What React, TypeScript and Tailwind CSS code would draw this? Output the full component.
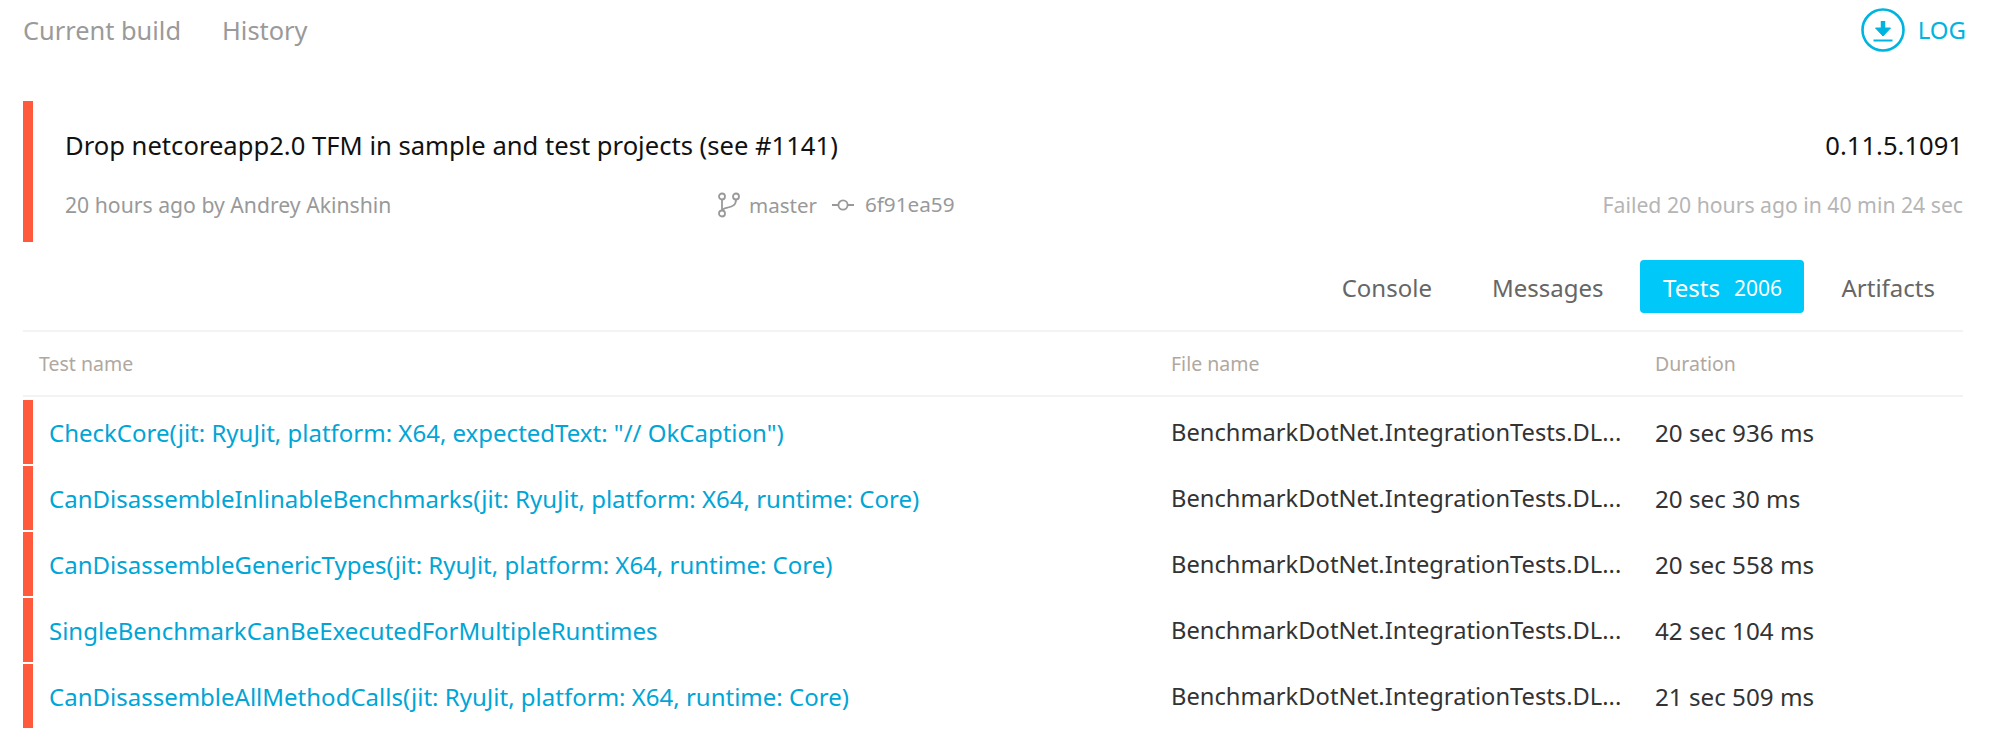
const tests = [
  { name: 'CheckCore(jit: RyuJit, platform: X64, expectedText: "// OkCaption")', duration: '20 sec 936 ms' },
  { name: 'CanDisassembleInlinableBenchmarks(jit: RyuJit, platform: X64, runtime: Core)', duration: '20 sec 30 ms' },
  { name: 'CanDisassembleGenericTypes(jit: RyuJit, platform: X64, runtime: Core)', duration: '20 sec 558 ms' },
  { name: 'SingleBenchmarkCanBeExecutedForMultipleRuntimes', duration: '42 sec 104 ms' },
  { name: 'CanDisassembleAllMethodCalls(jit: RyuJit, platform: X64, runtime: Core)', duration: '21 sec 509 ms' },
];

function BranchIcon() {
  return (
    <svg width="24" height="26" viewBox="0 0 24 26" fill="none" stroke="currentColor" strokeWidth="1.8">
      <circle cx="5" cy="4.5" r="3" />
      <circle cx="19" cy="4.5" r="3" />
      <circle cx="5" cy="21.5" r="3" />
      <path d="M5 7.5v11" />
      <path d="M19 7.5c0 6-4 7-8 8-3 .8-6 1.5-6 3" />
    </svg>
  );
}

function CommitIcon() {
  return (
    <svg width="22" height="14" viewBox="0 0 22 14" fill="none" stroke="currentColor" strokeWidth="1.8">
      <circle cx="11" cy="7" r="4.6" />
      <path d="M0 7h6.4M15.6 7H22" />
    </svg>
  );
}

export default function App() {
  return (
    <div className="h-[730px] overflow-hidden bg-white pl-[23px] pr-[26px] font-['Noto_Sans',sans-serif]">
      {/* Top nav */}
      <div className="flex h-[60px] items-center justify-between">
        <div className="flex items-center gap-[41px] text-[25.4px] text-[#9a9a9a]">
          <span>Current build</span>
          <span>History</span>
        </div>
        <div className="-mr-[3px] flex items-center gap-[13px] text-[#00b4e0]">
          <svg width="44" height="44" viewBox="0 0 44 44" fill="none" stroke="currentColor">
            <circle cx="22" cy="22" r="20.5" strokeWidth="2.6" />
            <path d="M22 13v10" strokeWidth="4.5" />
            <path d="M14.5 20l7.5 8 7.5-8z" fill="currentColor" strokeWidth="1" />
            <path d="M12.5 32.5h19" strokeWidth="2" />
          </svg>
          <span className="text-[24px]">LOG</span>
        </div>
      </div>

      {/* Build summary */}
      <div className="mt-[41px] flex h-[141px] border-l-[10px] border-[#ff5a3c] pl-8">
        <div className="flex flex-1 flex-col">
          <div className="mt-[31px] flex h-7 items-center justify-between text-[25.6px] text-[#111111]">
            <span>Drop netcoreapp2.0 TFM in sample and test projects (see #1141)</span>
            <span>0.11.5.1091</span>
          </div>
          <div className="mt-[29px] grid h-7 grid-cols-[652px_1fr_auto] items-center text-[20.5px] text-[#999999]">
            <span className="text-[21.2px]">20 hours ago by Andrey Akinshin</span>
            <div className="flex items-center">
              <BranchIcon />
              <span className="ml-[8px]">master</span>
              <span className="ml-[15px]"><CommitIcon /></span>
              <span className="ml-[11px] text-[20.7px]">6f91ea59</span>
            </div>
            <span className="text-[21.2px] text-[#b5b5b5]">Failed 20 hours ago in 40 min 24 sec</span>
          </div>
        </div>
      </div>

      {/* Tabs */}
      <div className="mt-[18px] flex h-[53px] items-center justify-end pr-[28px] text-[24px] text-[#666666]">
        <span className="mr-[60px] pt-[2px]">Console</span>
        <span className="mr-[37px] pt-[2px]">Messages</span>
        <span className="mr-[37px] flex h-[53px] w-[164px] items-center justify-center gap-[14px] rounded-[4px] bg-[#00c8f8] pt-[2px] text-white">
          Tests <span className="pt-[2px] text-[21px]">2006</span>
        </span>
        <span className="pt-[2px]">Artifacts</span>
      </div>

      {/* Table */}
      <div className="mt-[17px] border-t-2 border-[#f3f3f3]">
        <div className="grid h-[65px] grid-cols-[1132px_484px_1fr] items-center border-b-2 border-[#f3f3f3] pl-4 text-[19.5px] text-[#b0a8a0]">
          <span>Test name</span>
          <span>File name</span>
          <span>Duration</span>
        </div>
        <div className="mt-[3px] flex flex-col gap-[2px]">
          {tests.map((test) => (
            <div
              key={test.name}
              className="grid h-[64px] shrink-0 grid-cols-[1122px_484px_1fr] items-center border-l-[10px] border-[#ff5a3c] pl-4 pt-[2px] text-[24px]"
            >
              <span className="truncate text-[#00a5d6]">{test.name}</span>
              <span className="text-[23.7px] text-[#333333]">BenchmarkDotNet.IntegrationTests.DL...</span>
              <span className="text-[24.2px] text-[#333333]">{test.duration}</span>
            </div>
          ))}
        </div>
      </div>
    </div>
  );
}
